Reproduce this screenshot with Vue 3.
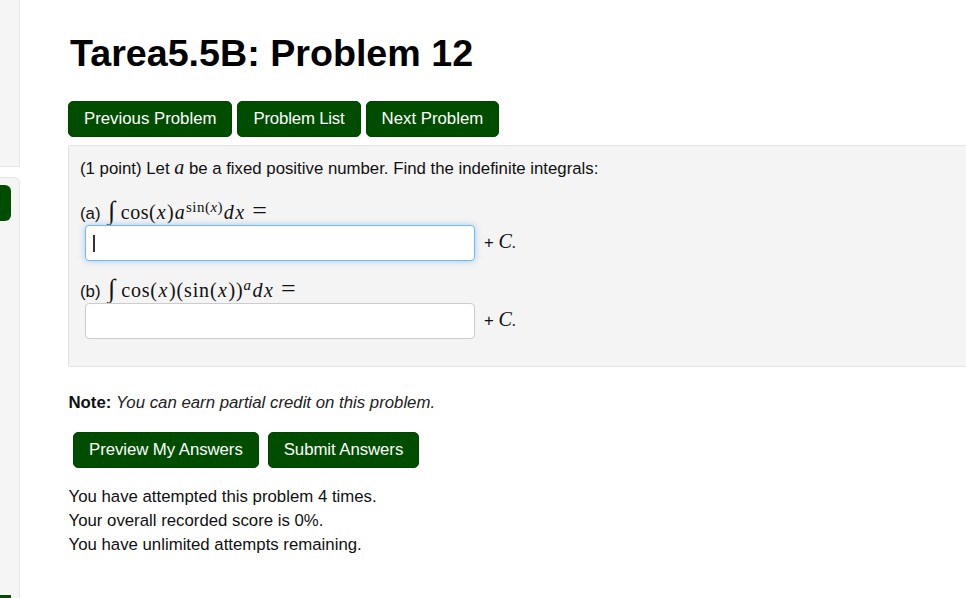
<script setup>
const nav = ['Previous Problem', 'Problem List', 'Next Problem']
const status = [
  'You have attempted this problem 4 times.',
  'Your overall recorded score is 0%.',
  'You have unlimited attempts remaining.'
]
</script>

<template>
  <div class="page">
    <aside class="side">
      <div class="panel top"></div>
      <div class="panel lower">
        <div class="tab"></div>
        <div class="tab end"></div>
      </div>
    </aside>
    <main class="main">
      <h1 class="title">Tarea5.5B: Problem 12</h1>
      <nav class="nav">
        <a v-for="n in nav" :key="n" class="btn">{{ n }}</a>
      </nav>
      <section class="problem">
        <p class="intro">(1 point) Let <i class="m big">a</i> be a fixed positive number. Find the indefinite integrals:</p>
        <div class="part first">
          <div class="label">(a) <span class="math"><span class="int">∫</span>cos(<i>x</i>)<i>a</i><sup>sin(<i>x</i>)</sup><i class="dx">dx</i><span class="eq">=</span></span></div>
          <div class="row">
            <div class="field focus"><span class="caret"></span></div>
            <span class="after">+ <i class="m">C</i><span class="dot">.</span></span>
          </div>
        </div>
        <div class="part second">
          <div class="label">(b) <span class="math wide"><span class="int">∫</span>cos(<i>x</i>)(sin(<i>x</i>))<sup><i>a</i></sup><i class="dx">dx</i><span class="eq">=</span></span></div>
          <div class="row">
            <div class="field"></div>
            <span class="after">+ <i class="m">C</i><span class="dot">.</span></span>
          </div>
        </div>
      </section>
      <p class="note"><b>Note:</b> <em>You can earn partial credit on this problem.</em></p>
      <div class="actions">
        <a class="btn">Preview My Answers</a>
        <a class="btn">Submit Answers</a>
      </div>
      <div class="status">
        <div v-for="s in status" :key="s">{{ s }}</div>
      </div>
    </main>
  </div>
</template>

<style>
html, body { margin: 0; background: #fff; overflow: hidden; }
</style>

<style scoped>
.page {
  display: flex;
  width: 966px;
  height: 598px;
  overflow: hidden;
  font-family: "Liberation Sans", Arial, sans-serif;
  font-size: 16.8px;
  color: #111;
}
.side { width: 20px; flex: none; }
.panel {
  width: 19px;
  background: #f5f5f5;
  border-right: 1px solid #e6e6e6;
}
.top { height: 166px; border-bottom: 1px solid #e6e6e6; }
.lower {
  margin-top: 10px;
  height: 413px;
  border-top: 1px solid #e6e6e6;
  border-top-right-radius: 6px;
  padding-top: 7px;
  display: flex;
  flex-direction: column;
}
.tab {
  width: 11px;
  height: 36px;
  background: #004d00;
  border-radius: 0 6px 6px 0;
}
.tab.end { height: 3px; margin-top: auto; border-radius: 0; }
.main { flex: 1; min-width: 0; padding-left: 48px; }
.title {
  margin: 31px 0 0 2px;
  font-size: 37.65px;
  line-height: 45px;
  font-weight: 700;
  color: #000;
}
.nav { display: flex; gap: 5px; margin-top: 25px; }
.nav .btn:nth-child(2) { letter-spacing: -0.18px; }
.btn {
  display: block;
  height: 36px;
  line-height: 33px;
  box-sizing: border-box;
  padding: 0 15px;
  background: #004d00;
  border: 1px solid #004500;
  border-radius: 5px;
  color: #fff;
  font-size: 16.8px;
}
.problem {
  margin-top: 8px;
  width: 920px;
  height: 222px;
  box-sizing: border-box;
  background: #f4f4f4;
  border: 1px solid #e3e3e3;
  border-radius: 2px 0 0 2px;
  padding: 10px 11px;
}
.intro { margin: 0; line-height: 22px; }
.m { font-family: "Liberation Serif", serif; font-style: italic; }
.big { font-size: 20px; }
.part.first { margin-top: 20px; }
.part.second { margin-top: 17px; }
.label { line-height: 24px; height: 24px; white-space: nowrap; }
.math { font-family: "Liberation Serif", serif; font-size: 20px; letter-spacing: 0.5px; }
.math.wide { letter-spacing: 0.85px; }
.math i { margin: 0 0.7px; }
.math .dx { letter-spacing: 1.4px; }
.math sup { font-size: 15px; line-height: 0; vertical-align: 7px; }
.math sup i { margin: 0; }
.int { font-style: italic; font-size: 26px; line-height: 0; margin: 0 5px 0 3px; }
.eq { font-size: 26px; line-height: 0; margin-left: 6px; letter-spacing: 0; }
.row { display: flex; align-items: center; margin-top: 1px; padding-left: 5px; }
.field {
  width: 390px;
  height: 36px;
  box-sizing: border-box;
  background: #fff;
  border: 1px solid #ccc;
  border-radius: 4px;
  display: flex;
  align-items: center;
  padding-left: 7px;
}
.focus {
  border-color: #72b8f2;
  box-shadow: 0 0 6px rgba(82, 168, 236, 0.5);
}
.caret { width: 2px; height: 17px; background: #333; }
.after { margin: 0 0 4px 9px; white-space: nowrap; }
.after .m { font-size: 20px; }
.dot { font-family: "Liberation Serif", serif; font-size: 16px; }
.note { margin: 25px 0 0 0.5px; line-height: 22px; color: #222; }
.note b { color: #111; }
.actions { display: flex; gap: 9px; margin: 18px 0 0 5px; }
.actions .btn { letter-spacing: -0.06px; }
.status { margin: 17px 0 0 0.5px; line-height: 24px; }
</style>
